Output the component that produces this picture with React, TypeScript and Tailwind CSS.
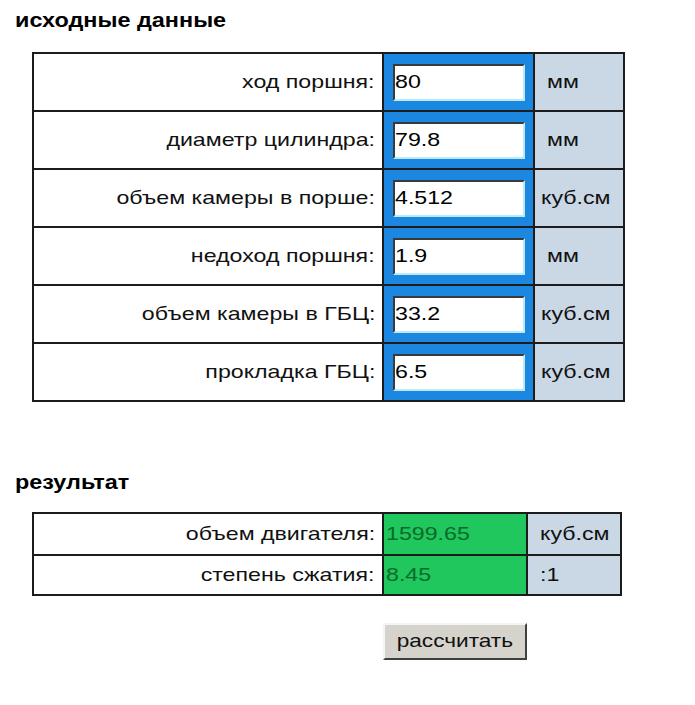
import React from "react";

const inputs = [
  { label: "ход поршня:", value: "80", unit: "мм", pad: "pl-[12px]" },
  { label: "диаметр цилиндра:", value: "79.8", unit: "мм", pad: "pl-[12px]" },
  { label: "объем камеры в порше:", value: "4.512", unit: "куб.см", pad: "pl-[6px]" },
  { label: "недоход поршня:", value: "1.9", unit: "мм", pad: "pl-[12px]" },
  { label: "объем камеры в ГБЦ:", value: "33.2", unit: "куб.см", pad: "pl-[6px]" },
  { label: "прокладка ГБЦ:", value: "6.5", unit: "куб.см", pad: "pl-[6px]" },
];

const results = [
  { label: "объем двигателя:", value: "1599.65", unit: "куб.см" },
  { label: "степень сжатия:", value: "8.45", unit: ":1" },
];

const R = ({ children }: { children: React.ReactNode }) => (
  <span className="inline-block scale-x-[1.22] origin-right whitespace-nowrap">{children}</span>
);
const L = ({ children }: { children: React.ReactNode }) => (
  <span className="inline-block scale-x-[1.22] origin-left whitespace-nowrap">{children}</span>
);

export default function App() {
  return (
    <div
      className="w-[695px] h-[705px] bg-white text-black"
      style={{ fontFamily: '"Liberation Sans", Arial, sans-serif' }}
    >
      <div className="pl-[15px] pt-[8px] text-[20px] font-bold leading-[24px]">
        <span className="inline-block scale-x-[1.17] origin-left">исходные данные</span>
      </div>
      <table className="ml-[32px] mt-[20px] border-collapse text-[19px]">
        <tbody>
          {inputs.map((r) => (
            <tr key={r.label} className="h-[58px]">
              <td className="w-[350px] border-2 border-[#1c1c1c] text-right pr-[7px] text-[#111]">
                <R>{r.label}</R>
              </td>
              <td className="w-[151px] border-2 border-[#1c1c1c] bg-[#1b87e0] pl-[9px] pr-[8px]">
                <div className="flex items-center w-[132px] h-[37px] bg-white border-2 border-t-[#3a3a3a] border-l-[#3a3a3a] border-b-[#b7ecf7] border-r-[#b7ecf7] pl-0 text-[19px] text-black">
                  <L>{r.value}</L>
                </div>
              </td>
              <td className={`w-[90px] border-2 border-[#1c1c1c] bg-[#cad7e4] ${r.pad} text-[#111]`}>
                <L>{r.unit}</L>
              </td>
            </tr>
          ))}
        </tbody>
      </table>
      <div className="pl-[15px] mt-[68px] text-[20px] font-bold leading-[24px]">
        <span className="inline-block scale-x-[1.17] origin-left">результат</span>
      </div>
      <table className="ml-[32px] mt-[18px] border-collapse text-[19px]">
        <tbody>
          {results.map((r, i) => (
            <tr key={r.label} className={i === 0 ? "h-[42px]" : "h-[40px]"}>
              <td className="w-[350px] border-2 border-[#1c1c1c] text-right pr-[7px] text-[#111]">
                <R>{r.label}</R>
              </td>
              <td className="w-[144px] border-2 border-[#1c1c1c] bg-[#1fc75c] pl-[2px] text-[#0d6a2a]">
                <L>{r.value}</L>
              </td>
              <td className="w-[94px] border-2 border-[#1c1c1c] bg-[#cad7e4] pl-[12px] text-[#111]">
                <L>{r.unit}</L>
              </td>
            </tr>
          ))}
        </tbody>
      </table>
      <div className="pl-[383px] mt-[27px]">
        <button
          className="w-[144px] h-[37px] bg-[#d6d3cc] border-2 border-t-[#f4f4f4] border-l-[#f4f4f4] border-b-[#404040] border-r-[#404040] text-[19px] text-[#111]"
          style={{ fontFamily: '"Liberation Sans", Arial, sans-serif' }}
        >
          <span className="inline-block scale-x-[1.19]">рассчитать</span>
        </button>
      </div>
    </div>
  );
}
